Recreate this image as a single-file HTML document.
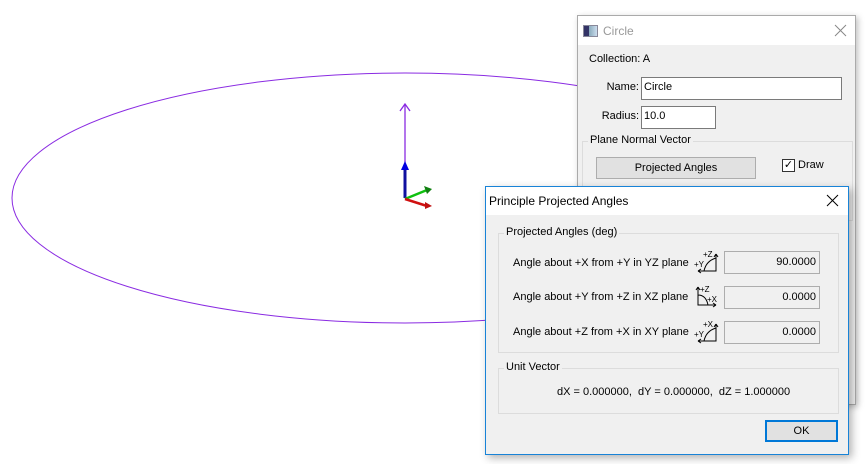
<!DOCTYPE html>
<html><head><style>
body{margin:0;width:867px;height:464px;background:#fff;position:relative;overflow:hidden;font-family:"Liberation Sans",sans-serif;font-size:11px;color:#000}
.a{position:absolute}
.inp{position:absolute;background:#fff;border:1px solid #7a7a7a;box-sizing:border-box;padding:3px 2px;font-size:11px}
.ro{position:absolute;background:#f0f0f0;border:1px solid #adadad;box-sizing:border-box;padding:4px 3px;text-align:right}
.grp{position:absolute;border:1px solid #dcdcdc;box-sizing:border-box}
.gl{position:absolute;background:#f0f0f0;padding:0 2px;top:-8px;left:5px}
.x{position:absolute;width:14px;height:14px}
</style></head><body>
<svg class="a" style="left:0;top:0" width="867" height="464">
<ellipse cx="405" cy="198" rx="393" ry="125" fill="none" stroke="#8a2be2" stroke-width="1"/>
<line x1="405" y1="104" x2="405" y2="165" stroke="#8a2be2" stroke-width="1.3"/>
<path d="M400 111 L405 104 L410 111" fill="none" stroke="#8a2be2" stroke-width="1.3"/>
<line x1="405" y1="198" x2="405" y2="168" stroke="#1010a0" stroke-width="3"/>
<path d="M401 170 L405 161 L409 170Z" fill="#0000e0"/>
<line x1="405" y1="199" x2="427" y2="190" stroke="#10c010" stroke-width="2.5"/>
<path d="M424 186 L432 189 L427 194Z" fill="#108010"/>
<line x1="405" y1="199" x2="427" y2="206" stroke="#d01010" stroke-width="2.5"/>
<path d="M425 202 L432 206 L425 209Z" fill="#c01010"/>
</svg>
<!-- Circle window -->
<div class="a" style="left:577px;top:15px;width:279px;height:390px;background:#f0f0f0;border:1px solid #aaa;box-sizing:border-box;box-shadow:2px 2px 6px rgba(0,0,0,.25)">
<div class="a" style="left:0;top:0;width:277px;height:29px;background:#fff"></div>
<div class="a" style="left:5px;top:9px;width:13px;height:10px;background:linear-gradient(90deg,#336 0,#336 5px,#8ab 5px,#cde 13px);border:1px solid #889"></div>
<div class="a" style="left:25px;top:8px;color:#999;font-size:12px">Circle</div>
<svg class="x" style="left:256px;top:8px"><path d="M1 1L12 12M12 1L1 12" stroke="#888" stroke-width="1"/></svg>
<div class="a" style="left:11px;top:37px">Collection: A</div>
<div class="a" style="left:0;width:61px;text-align:right;top:65px">Name:</div>
<div class="inp" style="left:63px;top:61px;width:201px;height:23px">Circle</div>
<div class="a" style="left:0;width:61px;text-align:right;top:94px">Radius:</div>
<div class="inp" style="left:63px;top:90px;width:75px;height:23px">10.0</div>
<div class="grp" style="left:4px;top:125px;width:271px;height:80px"><div class="gl">Plane Normal Vector</div></div>
<div class="a" style="left:18px;top:141px;width:160px;height:22px;background:#e1e1e1;border:1px solid #adadad;box-sizing:border-box;text-align:center;line-height:20px">Projected Angles</div>
<div class="a" style="left:204px;top:143px;width:13px;height:13px;border:1px solid #333;background:#fff;box-sizing:border-box;font-size:11px;line-height:11px;text-align:center">✓</div>
<div class="a" style="left:220px;top:143px">Draw</div>
</div>
<!-- Dialog -->
<div class="a" style="left:485px;top:186px;width:364px;height:269px;background:#f0f0f0;border:1px solid #1883d7;box-sizing:border-box;box-shadow:3px 3px 8px rgba(0,0,0,.3)">
<div class="a" style="left:0;top:0;width:362px;height:28px;background:#fff"></div>
<div class="a" style="left:3px;top:7px;font-size:12px">Principle Projected Angles</div>
<svg class="x" style="left:340px;top:7px"><path d="M1 1L12 12M12 1L1 12" stroke="#000" stroke-width="1"/></svg>
<div class="grp" style="left:12px;top:46px;width:341px;height:120px"><div class="gl">Projected Angles (deg)</div></div>
<div class="a" style="left:27px;top:70px">Angle about +X from +Y in YZ plane</div>
<div class="a" style="left:27px;top:104px">Angle about +Y from +Z in XZ plane</div>
<div class="a" style="left:27px;top:139px">Angle about +Z from +X in XY plane</div>
<svg class="a" style="left:208px;top:62px" width="26" height="26"><path d="M4 22H22V5M22 5l-2 3M22 5l2 3M4 22l3-2M4 22l3 2M10 22Q12 12 22 9" fill="none" stroke="#000"/><text x="9" y="8" font-size="8">+Z</text><text x="0" y="18" font-size="8">+Y</text></svg>
<svg class="a" style="left:208px;top:96px" width="26" height="26"><path d="M4 4V22H22M4 4l-2 3M4 4l2 3M22 22l-3-2M22 22l-3 2M4 12Q12 12 14 22" fill="none" stroke="#000"/><text x="6" y="9" font-size="8">+Z</text><text x="13" y="19" font-size="8">+X</text></svg>
<svg class="a" style="left:208px;top:132px" width="26" height="26"><path d="M4 22H22V5M22 5l-2 3M22 5l2 3M4 22l3-2M4 22l3 2M10 22Q12 12 22 9" fill="none" stroke="#000"/><text x="9" y="8" font-size="8">+X</text><text x="0" y="18" font-size="8">+Y</text></svg>
<div class="ro" style="left:238px;top:64px;width:96px;height:23px">90.0000</div>
<div class="ro" style="left:238px;top:99px;width:96px;height:23px">0.0000</div>
<div class="ro" style="left:238px;top:134px;width:96px;height:23px">0.0000</div>
<div class="grp" style="left:12px;top:181px;width:341px;height:46px"><div class="gl">Unit Vector</div></div>
<div class="a" style="left:71px;top:199px">dX = 0.000000,&nbsp; dY = 0.000000,&nbsp; dZ = 1.000000</div>
<div class="a" style="left:279px;top:233px;width:73px;height:22px;background:#e1e1e1;border:2px solid #0078d7;box-sizing:border-box;text-align:center;line-height:18px">OK</div>
</div>
</body></html>
